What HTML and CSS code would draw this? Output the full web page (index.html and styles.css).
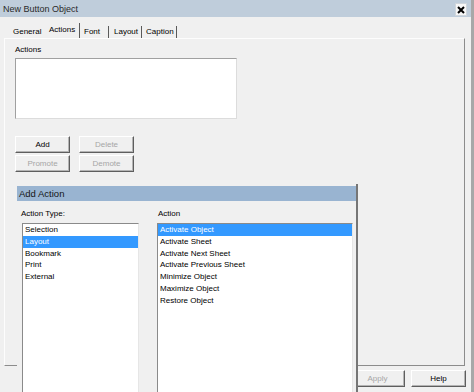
FILE: index.html
```html
<!DOCTYPE html>
<html>
	<head>
		<title>New Button Object</title>
		<meta charset="UTF-8">
		<link rel="stylesheet" href="styles.css">
	</head>
	<body>
		<div class="window">
			<div class="titlebar">
				<span class="title">New Button Object</span>
				<span class="close">
					<svg width="8" height="8" viewBox="0 0 8 8"><path d="M1 1 L7 7 M7 1 L1 7" stroke="#000" stroke-width="2"/></svg>
				</span>
			</div>

			<div class="tabs">
				<span class="tab tab-general">General</span>
				<span class="tab tab-actions selected">Actions</span>
				<span class="tab tab-font">Font</span>
				<span class="tab tab-layout">Layout</span>
				<span class="tab tab-caption">Caption</span>
			</div>

			<div class="panel">
				<div class="label">Actions</div>
				<div class="actions-box"></div>
				<div class="btn-grid">
					<button class="btn">Add</button>
					<button class="btn disabled">Delete</button>
					<button class="btn disabled">Promote</button>
					<button class="btn disabled">Demote</button>
				</div>
			</div>

			<div class="footer">
				<button class="btn disabled">Apply</button>
				<button class="btn">Help</button>
			</div>

			<!-- floating "Add Action" window over the tab page -->
			<div class="popup">
				<div class="popup-head">Add Action</div>
				<div class="popup-body">
					<div class="col-label type-label">Action Type:</div>
					<div class="col-label action-label">Action</div>
					<div class="list">
						<div class="item">Selection</div>
						<div class="item sel">Layout</div>
						<div class="item">Bookmark</div>
						<div class="item">Print</div>
						<div class="item">External</div>
					</div>
					<div class="list">
						<div class="item sel">Activate Object</div>
						<div class="item">Activate Sheet</div>
						<div class="item">Activate Next Sheet</div>
						<div class="item">Activate Previous Sheet</div>
						<div class="item">Minimize Object</div>
						<div class="item">Maximize Object</div>
						<div class="item">Restore Object</div>
					</div>
				</div>
			</div>
		</div>
	</body>
</html>
```

FILE: styles.css
```css
body{
	margin: 0;
	background: #f0f0f0;
	font-family: "Liberation Sans", Arial, sans-serif;
	font-size: 8px;
	color: #000;
}

.window{
	position: relative;
	width: 471px;
	height: 392px;
	border-right: 3px solid #a8a8a8;
	overflow: hidden;
}

.titlebar{
	height: 17px;
	background: #bfcddb;
	display: flex;
	align-items: center;
	justify-content: space-between;
	padding: 0 4px 0 3px;
}

.title{
	font-size: 9px;
	color: #2a2a2a;
}

.close{
	box-sizing: border-box;
	width: 12px;
	height: 13px;
	margin-top: 2px;
	background: #f7f7f7;
	border: 1px solid #d0d6dc;
	display: flex;
	align-items: center;
	justify-content: center;
}

.tabs{
	height: 21px;
	display: flex;
	align-items: flex-end;
	padding-left: 9px;
}

.tab{
	box-sizing: border-box;
	height: 12px;
	line-height: 11px;
	border-right: 1px solid #5a5a5a;
}

.tab.selected{
	height: 15px;
	padding-top: 1px;
}

.tab-general{ width: 37px; padding-left: 4px; border-right: none; }
.tab-actions{ width: 34px; padding-left: 3px; }
.tab-font{ width: 29px; padding-left: 4px; }
.tab-layout{ width: 33px; padding-left: 5px; }
.tab-caption{ width: 35px; padding-left: 4px; }

.panel{
	box-sizing: border-box;
	margin-left: 4px;
	width: 461px;
	height: 328px;
	border-top: 1px solid #fdfdfd;
	border-left: 1px solid #fdfdfd;
	border-right: 1px solid #8c8c8c;
	border-bottom: 1px solid #8c8c8c;
	padding: 5px 0 0 10px;
}

.label{
	line-height: 11px;
}

.actions-box{
	box-sizing: border-box;
	width: 222px;
	height: 61px;
	margin-top: 3px;
	background: #fff;
	border: 1px solid #dcdcdc;
	border-top-color: #a0a0a0;
	border-left-color: #a0a0a0;
}

.btn-grid{
	margin-top: 17px;
	display: grid;
	grid-template-columns: 55px 55px;
	column-gap: 9px;
	row-gap: 2px;
}

.btn{
	box-sizing: border-box;
	width: 55px;
	height: 17px;
	padding: 0;
	background: #f0f0f0;
	border: 1px solid;
	border-color: #fff #5e5e5e #5e5e5e #fff;
	box-shadow: inset -1px -1px #b4b4b4;
	font: inherit;
	color: #000;
}

.btn.disabled{
	color: #a6a6a6;
}

.footer{
	display: flex;
	justify-content: flex-end;
	gap: 6px;
	margin-top: 4px;
	padding-right: 5px;
}

.popup{
	position: absolute;
	left: 17px;
	top: 184px;
	box-sizing: border-box;
	width: 341px;
	height: 220px;
	padding-top: 2px;
	background: #f0f0f0;
	border-right: 2px solid #767676;
}

.popup-head{
	height: 15px;
	line-height: 15px;
	padding-left: 2px;
	background: #99b4d1;
	font-size: 9.5px;
	color: #151515;
}

.popup-body{
	display: grid;
	grid-template-columns: 117px 196px;
	column-gap: 18px;
	padding-left: 5px;
	margin-top: 7px;
}

.col-label{
	line-height: 11px;
	margin-bottom: 4px;
}

.type-label{ margin-left: -1px; }
.action-label{ margin-left: 1px; }

.list{
	box-sizing: border-box;
	height: 190px;
	background: #fff;
	border: 1px solid #e6e6e6;
	border-top-color: #8a8a8a;
	border-left-color: #8a8a8a;
}

.item{
	line-height: 11.8px;
	padding-left: 2px;
	white-space: nowrap;
}

.item.sel{
	background: #3399ff;
	color: #fff;
}
```
